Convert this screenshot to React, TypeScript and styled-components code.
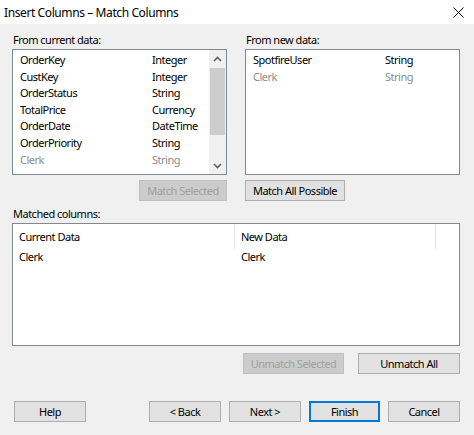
import React from "react";
import styled, { createGlobalStyle } from "styled-components";

const GlobalStyle = createGlobalStyle`
    html, body {
        margin: 0;
        padding: 0;
        background: #f0f0f0;
    }
    * {
        box-sizing: border-box;
    }
`;

const Window = styled.div`
    width: 474px;
    height: 435px;
    background: #f0f0f0;
    font-family: "Noto Sans", "Open Sans", sans-serif;
    font-size: 11px;
    letter-spacing: -0.5px;
    color: #000;
    display: flex;
    flex-direction: column;
`;

const TitleBar = styled.div`
    height: 24px;
    background: #fff;
    display: flex;
    align-items: center;
    justify-content: space-between;
    padding: 0 10px 0 4px;
    font-size: 12px;
    letter-spacing: -0.4px;
`;

const CloseIcon = styled.svg`
    width: 11px;
    height: 11px;
`;

const Body = styled.div`
    flex: 1;
    display: flex;
    flex-direction: column;
    padding: 9px 14px 0 12px;
`;

const TopPanels = styled.div`
    display: flex;
    gap: 18px;
`;

const Column = styled.div`
    width: 215px;
    display: flex;
    flex-direction: column;
`;

const Label = styled.div`
    height: 16px;
    line-height: 14px;
    padding-left: 1px;
`;

const ListBox = styled.div<{ $h: number }>`
    height: ${(p) => p.$h}px;
    background: #fff;
    border: 1px solid #828790;
    display: flex;
`;

const ListRows = styled.div`
    flex: 1;
    padding: 2px 0 0 7px;
`;

const ListRow = styled.div<{ $muted?: boolean }>`
    display: grid;
    grid-template-columns: 132px 1fr;
    height: 16.6px;
    line-height: 16.6px;
    color: ${(p) => (p.$muted ? "#8c8c8c" : "#000")};
    white-space: nowrap;
`;

const ScrollBar = styled.div`
    width: 17px;
    background: #f0f0f0;
    display: flex;
    flex-direction: column;
    align-items: center;
    padding: 0 1px;
`;

const ScrollArrow = styled.div`
    height: 17px;
    display: flex;
    align-items: center;
    justify-content: center;
`;

const ScrollTrack = styled.div`
    flex: 1;
    width: 100%;
    padding-top: 1px;
`;

const ScrollThumb = styled.div`
    height: 67px;
    background: #cdcdcd;
`;

const ButtonRow = styled.div<{ $justify?: string }>`
    display: flex;
    justify-content: ${(p) => p.$justify || "flex-start"};
    gap: 14px;
`;

const Button = styled.button<{ $w: number; $default?: boolean }>`
    width: ${(p) => p.$w}px;
    height: 21px;
    padding: 0;
    font-family: inherit;
    font-size: 11px;
    letter-spacing: -0.5px;
    color: #000;
    background: #e1e1e1;
    border: 1px solid ${(p) => (p.$default ? "#0078d7" : "#adadad")};
    box-shadow: ${(p) => (p.$default ? "inset 0 0 0 1px #0078d7" : "none")};
    border-radius: 0;

    &:disabled {
        color: #a0a0a0;
        background: #cccccc;
        border-color: #bfbfbf;
    }
`;

const MatchedBox = styled.div`
    height: 123px;
    background: #fff;
    border: 1px solid #828790;
    display: flex;
    flex-direction: column;
`;

const HeaderRow = styled.div`
    display: grid;
    grid-template-columns: 222px 201px 1fr;
    height: 25px;
`;

const HeaderCell = styled.div`
    padding-left: 6px;
    line-height: 25px;
    border-right: 1px solid #e5e5e5;
`;

const DataRow = styled.div`
    display: grid;
    grid-template-columns: 222px 201px 1fr;
    height: 18px;
    line-height: 16px;
`;

const DataCell = styled.div`
    padding-left: 6px;
`;

const Spacer = styled.div<{ $h: number }>`
    height: ${(p) => p.$h}px;
    flex-shrink: 0;
`;

const Footer = styled.div`
    display: flex;
    align-items: center;
    padding-left: 2px;
`;

const FooterGroup = styled.div`
    margin-left: auto;
    display: flex;
    gap: 8px;
`;

const currentData = [
    ["OrderKey", "Integer"],
    ["CustKey", "Integer"],
    ["OrderStatus", "String"],
    ["TotalPrice", "Currency"],
    ["OrderDate", "DateTime"],
    ["OrderPriority", "String"],
];

const Chevron = ({ up }: { up?: boolean }) => (
    <svg width="9" height="6" viewBox="0 0 9 6">
        <path
            d={up ? "M1 5 L4.5 1.5 L8 5" : "M1 1 L4.5 4.5 L8 1"}
            fill="none"
            stroke="#606060"
            strokeWidth="1.6"
        />
    </svg>
);

const App = () => {
    return (
        <>
            <GlobalStyle />
            <Window>
                <TitleBar>
                    <span>Insert Columns – Match Columns</span>
                    <CloseIcon viewBox="0 0 11 11">
                        <path d="M0.5 0.5 L10.5 10.5 M10.5 0.5 L0.5 10.5" stroke="#000" strokeWidth="1" />
                    </CloseIcon>
                </TitleBar>
                <Body>
                    <TopPanels>
                        <Column>
                            <Label>From current data:</Label>
                            <ListBox $h={126}>
                                <ListRows>
                                    {currentData.map(([n, t]) => (
                                        <ListRow key={n}>
                                            <span>{n}</span>
                                            <span>{t}</span>
                                        </ListRow>
                                    ))}
                                    <ListRow $muted>
                                        <span>Clerk</span>
                                        <span>String</span>
                                    </ListRow>
                                </ListRows>
                                <ScrollBar>
                                    <ScrollArrow>
                                        <Chevron up />
                                    </ScrollArrow>
                                    <ScrollTrack>
                                        <ScrollThumb />
                                    </ScrollTrack>
                                    <ScrollArrow>
                                        <Chevron />
                                    </ScrollArrow>
                                </ScrollBar>
                            </ListBox>
                        </Column>
                        <Column>
                            <Label>From new data:</Label>
                            <ListBox $h={126}>
                                <ListRows>
                                    <ListRow>
                                        <span>SpotfireUser</span>
                                        <span>String</span>
                                    </ListRow>
                                    <ListRow $muted>
                                        <span>Clerk</span>
                                        <span>String</span>
                                    </ListRow>
                                </ListRows>
                            </ListBox>
                        </Column>
                    </TopPanels>
                    <Spacer $h={5} />
                    <TopPanels>
                        <Column>
                            <ButtonRow $justify="flex-end">
                                <Button $w={88} disabled>
                                    Match Selected
                                </Button>
                            </ButtonRow>
                        </Column>
                        <Column>
                            <ButtonRow>
                                <Button $w={100}>Match All Possible</Button>
                            </ButtonRow>
                        </Column>
                    </TopPanels>
                    <Spacer $h={6} />
                    <Label>Matched columns:</Label>
                    <MatchedBox>
                        <HeaderRow>
                            <HeaderCell>Current Data</HeaderCell>
                            <HeaderCell>New Data</HeaderCell>
                        </HeaderRow>
                        <DataRow>
                            <DataCell>Clerk</DataCell>
                            <DataCell>Clerk</DataCell>
                        </DataRow>
                    </MatchedBox>
                    <Spacer $h={7} />
                    <ButtonRow $justify="flex-end">
                        <Button $w={101} disabled>
                            Unmatch Selected
                        </Button>
                        <Button $w={102}>Unmatch All</Button>
                    </ButtonRow>
                    <Spacer $h={27} />
                    <Footer>
                        <Button $w={72}>Help</Button>
                        <FooterGroup>
                            <Button $w={72}>&lt; Back</Button>
                            <Button $w={72}>Next &gt;</Button>
                            <Button $w={71} $default>
                                Finish
                            </Button>
                            <Button $w={72}>Cancel</Button>
                        </FooterGroup>
                    </Footer>
                </Body>
            </Window>
        </>
    );
};

export default App;
